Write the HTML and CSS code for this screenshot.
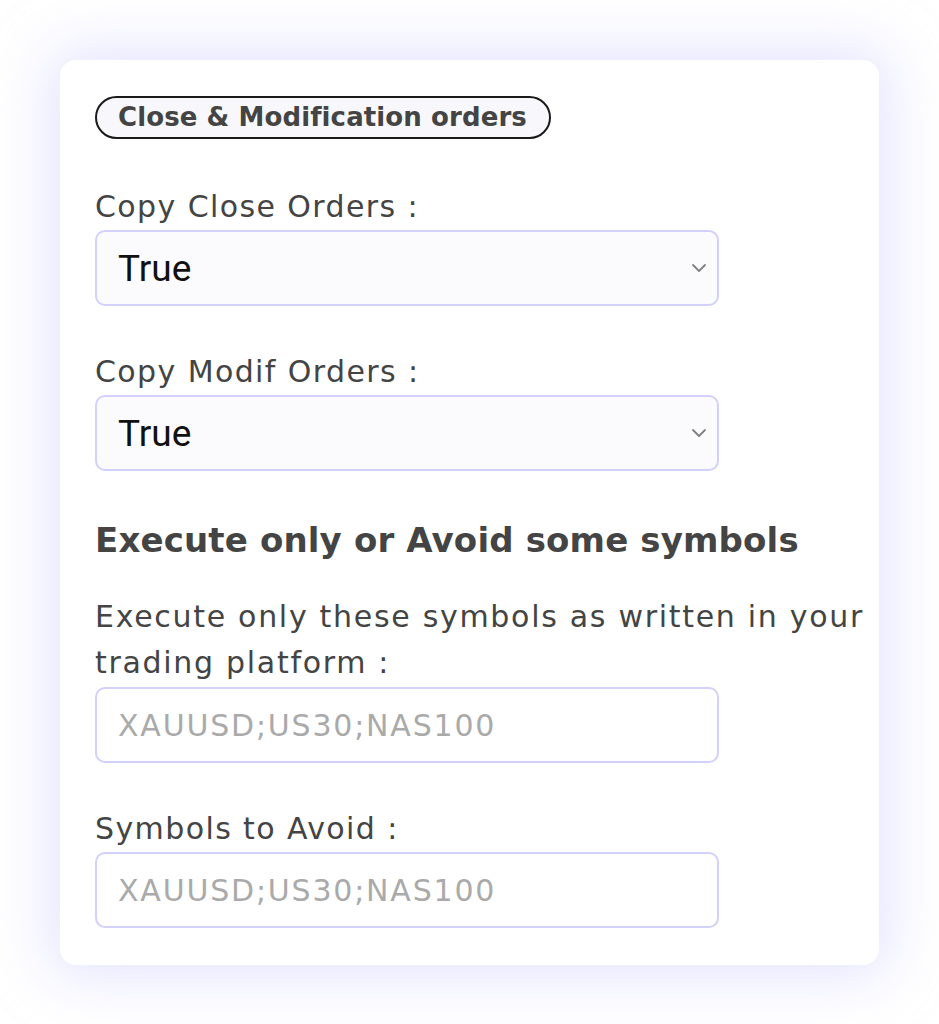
FILE: index.html
```html
<!DOCTYPE html>
<html>
<head>
<meta charset="utf-8">
<link rel="stylesheet" href="styles.css">
</head>
<body>
<div class="page">
  <div class="card">
    <div class="badge">Close &amp; Modification orders</div>
    <div class="field first">
      <label class="label">Copy Close Orders :</label>
      <div class="select"><span>True</span>
        <svg class="chev" width="16" height="10" viewBox="0 0 16 10"><path d="M2 2l6 6 6-6" fill="none" stroke="#808080" stroke-width="1.8" stroke-linecap="round" stroke-linejoin="round"/></svg>
      </div>
    </div>
    <div class="field">
      <label class="label">Copy Modif Orders :</label>
      <div class="select"><span>True</span>
        <svg class="chev" width="16" height="10" viewBox="0 0 16 10"><path d="M2 2l6 6 6-6" fill="none" stroke="#808080" stroke-width="1.8" stroke-linecap="round" stroke-linejoin="round"/></svg>
      </div>
    </div>
    <h2 class="heading">Execute only or Avoid some symbols</h2>
    <div class="field para-field">
      <label class="label para">Execute only these symbols as written in your trading platform :</label>
      <div class="input">XAUUSD;US30;NAS100</div>
    </div>
    <div class="field">
      <label class="label">Symbols to Avoid :</label>
      <div class="input">XAUUSD;US30;NAS100</div>
    </div>
  </div>
</div>
</body>
</html>
```
FILE: styles.css
```css
html, body {
  margin: 0;
  padding: 0;
  background: #ffffff;
}
body {
  font-family: "DejaVu Sans", sans-serif;
  color: #444444;
}
.page {
  padding: 60px 60px 59px 60px;
}
.card {
  width: 819px;
  height: 905px;
  box-sizing: border-box;
  background: #ffffff;
  border-radius: 16px;
  box-shadow: 0 0 55px 12px rgba(212, 212, 255, 0.6);
  padding: 36px 0 0 35px;
}
.badge {
  display: inline-block;
  box-sizing: border-box;
  height: 43px;
  line-height: 39px;
  padding: 0 22px 0 21px;
  border: 2px solid #1a1a1a;
  border-radius: 22px;
  background: #f8f8fc;
  font-weight: bold;
  font-size: 26px;
  letter-spacing: 0.1px;
  color: #444;
}
.field {
  display: flex;
  flex-direction: column;
  margin-top: 43px;
}
.field.first {
  margin-top: 45px;
}
.label {
  font-size: 30px;
  line-height: 46px;
  letter-spacing: 1.4px;
  color: #444;
}
.label.para {
  width: 784px;
  letter-spacing: 1.7px;
  margin-bottom: 1px;
}
.select, .input {
  box-sizing: border-box;
  width: 624px;
  height: 76px;
  border: 2px solid #d2d0fc;
  border-radius: 10px;
  background: #fbfbfd;
  display: flex;
  align-items: center;
  padding: 0 0 0 21px;
}
.select {
  font-family: Roboto, "Liberation Sans", sans-serif;
  font-size: 37px;
  color: #111;
  justify-content: space-between;
  padding-right: 10px;
}
.input {
  background: #ffffff;
  color: #aaaaaa;
  font-size: 30px;
  letter-spacing: 1.8px;
}
.heading {
  margin: 46px 0 0 0;
  font-size: 34px;
  line-height: 46px;
  letter-spacing: 0.15px;
  font-weight: bold;
  color: #444;
}
.field.para-field {
  margin-top: 31px;
}
```
